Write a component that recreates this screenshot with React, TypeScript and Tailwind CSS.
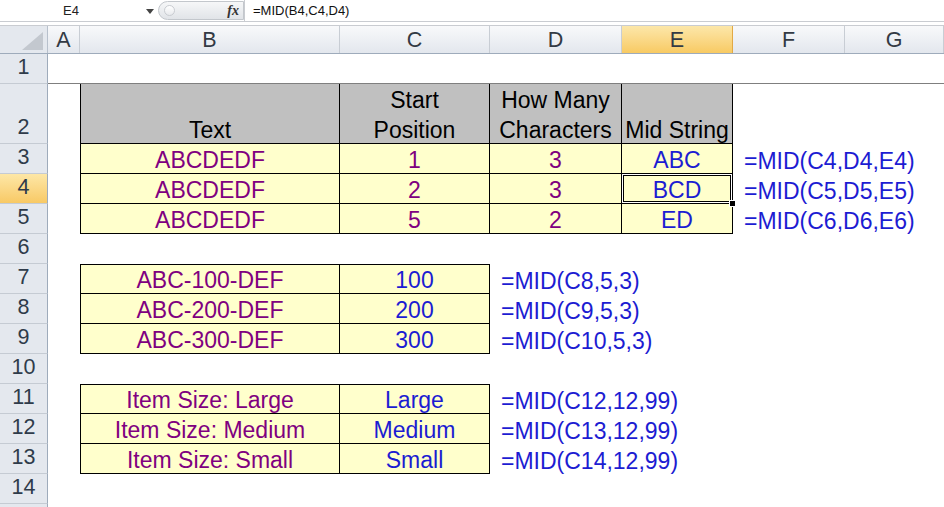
import React from "react";

// column widths for A..G and the rest of the sheet
const W = ["w-[32px]", "w-[260px]", "w-[150px]", "w-[132px]", "w-[111px]", "w-[112px]"];
const LETTERS = ["A", "B", "C", "D", "E", "F", "G"];

const purple = "text-[#800080]";
const blue = "text-[#1c1cd2]";
const yel = "bg-[#ffffcc] border-r border-b border-black";
const gray = "bg-[#c0c0c0] border-r border-b border-black text-black";

type C = { t?: React.ReactNode; cls?: string; left?: boolean };
type Row = { n: number; tall?: boolean; cells: Record<number, C>; line?: boolean; hide?: boolean };

const rows: Row[] = [
  { n: 1, line: true, cells: {} },
  {
    n: 2,
    tall: true,
    cells: {
      1: { t: "Text", cls: `${gray} border-l` },
      2: { t: <>Start<br />Position</>, cls: gray },
      3: { t: <>How Many<br />Characters</>, cls: gray },
      4: { t: "Mid String", cls: gray },
    },
  },
  ...[
    ["1", "3", "ABC", "=MID(C4,D4,E4)"],
    ["2", "3", "BCD", "=MID(C5,D5,E5)"],
    ["5", "2", "ED", "=MID(C6,D6,E6)"],
  ].map((r, i) => ({
    n: 3 + i,
    cells: {
      1: { t: "ABCDEDF", cls: `${yel} border-l ${purple}` },
      2: { t: r[0], cls: `${yel} ${purple}` },
      3: { t: r[1], cls: `${yel} ${purple}` },
      4: { t: r[2], cls: `${yel} ${blue}` },
      5: { t: r[3], cls: blue, left: true },
    },
  })),
  { n: 6, cells: {} },
  ...["100", "200", "300"].map((v, i) => ({
    n: 7 + i,
    cells: {
      1: { t: `ABC-${v}-DEF`, cls: `${yel} border-l ${purple} ${i === 0 ? "border-t" : ""}` },
      2: { t: v, cls: `${yel} ${blue} ${i === 0 ? "border-t" : ""}` },
      3: { t: `=MID(C${8 + i},5,3)`, cls: blue, left: true },
    },
  })),
  { n: 10, cells: {} },
  ...["Large", "Medium", "Small"].map((v, i) => ({
    n: 11 + i,
    cells: {
      1: { t: `Item Size: ${v}`, cls: `${yel} border-l ${purple} ${i === 0 ? "border-t" : ""}` },
      2: { t: v, cls: `${yel} ${blue} ${i === 0 ? "border-t" : ""}` },
      3: { t: `=MID(C${12 + i},12,99)`, cls: blue, left: true },
    },
  })),
  { n: 14, cells: {} },
  { n: 15, cells: {}, hide: true },
];

function Selection() {
  return (
    <div className="absolute -left-px -top-px -right-px -bottom-px z-10 border border-black">
      <div className="h-full w-full border border-white">
        <div className="h-full w-full border border-black" />
      </div>
      <div className="absolute -bottom-[4px] -right-[4px] h-[7px] w-[7px] border border-white bg-black" />
    </div>
  );
}

export default function App(): React.JSX.Element {
  return (
    <div className="h-[507px] w-[944px] overflow-hidden bg-white font-['Liberation_Sans',Arial,sans-serif]">
      {/* formula bar */}
      <div className="flex h-[22px] items-center border-b border-[#c9ccd1] bg-white">
        <div className="relative flex h-full w-[158px] shrink-0 items-center justify-center text-[13px] text-[#222]">
          <span className="-ml-[16px]">E4</span>
          <svg className="absolute right-[4px] top-[9px]" width="8" height="5" viewBox="0 0 8 5">
            <path d="M0 0h8L4 5z" fill="#444" />
          </svg>
        </div>
        <div className="flex h-[19px] w-[86px] shrink-0 items-center justify-between rounded-l-full border border-[#c3c7cc] bg-gradient-to-b from-[#f6f7f8] to-[#e1e4e8] pl-[5px] pr-[4px]">
          <span className="h-[11px] w-[11px] rounded-full border border-[#c9ccd1] bg-gradient-to-b from-white to-[#e8eaed]" />
          <span className="font-['Liberation_Serif',serif] text-[14px] font-bold italic text-[#333]">fx</span>
        </div>
        <div className="h-full w-px bg-[#c9ccd1]" />
        <div className="pl-[8px] text-[13px] text-[#111]">=MID(B4,C4,D4)</div>
      </div>
      <div className="h-[4px] border-b border-[#c9ccd1] bg-white" />

      {/* column headers */}
      <div className="flex h-[28px] border-b border-[#9eabbb] text-[21.5px] text-[#333a44]">
        <div className="relative w-[48px] shrink-0 border-r border-[#b7c0cc] bg-[#e4e8ee]">
          <svg className="absolute bottom-[3px] right-[4px]" width="21" height="18" viewBox="0 0 21 18">
            <path d="M21 0V18H0z" fill="#c3c8cf" />
          </svg>
        </div>
        {LETTERS.map((l, i) => (
          <div
            key={l}
            className={`${i < 6 ? W[i] : "min-w-0 flex-1"} flex shrink-0 items-center justify-center border-r pt-[1px] ${
              l === "E"
                ? "border-[#e2a945] bg-gradient-to-b from-[#fce7a9] to-[#f8ca62]"
                : "border-[#c8cdd4] bg-gradient-to-b from-[#f8f9fb] to-[#e3e7ed]"
            }`}
          >
            {l}
          </div>
        ))}
      </div>

      {/* sheet */}
      {rows.map((row) => (
        <div key={row.n} className={`flex ${row.tall ? "h-[60px]" : "h-[30px]"}`}>
          <div
            className={`flex w-[48px] shrink-0 items-end justify-center border-r border-b border-r-[#9eabbb] border-b-[#c5cbd3] text-[21.5px] leading-[31px] text-[#2f3b4a] ${
              row.n === 4 ? "bg-gradient-to-b from-[#fde7a6] to-[#f8c964]" : "bg-[#e4e8ee]"
            }`}
          >
            {row.hide ? "" : row.n}
          </div>
          {[0, 1, 2, 3, 4, 5, 6].map((ci) => {
            const c = row.cells[ci];
            const base = `${ci < 6 ? W[ci] : "min-w-0 flex-1"} relative flex shrink-0 items-end whitespace-nowrap text-[23px] leading-[30px] pb-[1px]`;
            const line = row.line ? "border-b border-[#7f7f7f]" : "";
            return (
              <div
                key={ci}
                className={`${base} ${line} ${c?.left ? "justify-start pl-[11px]" : "justify-center"} ${c?.cls ?? ""}`}
              >
                {c?.t !== undefined && <span className="-mb-[3px] text-center">{c.t}</span>}
                {row.n === 4 && ci === 4 && <Selection />}
              </div>
            );
          })}
        </div>
      ))}
    </div>
  );
}
